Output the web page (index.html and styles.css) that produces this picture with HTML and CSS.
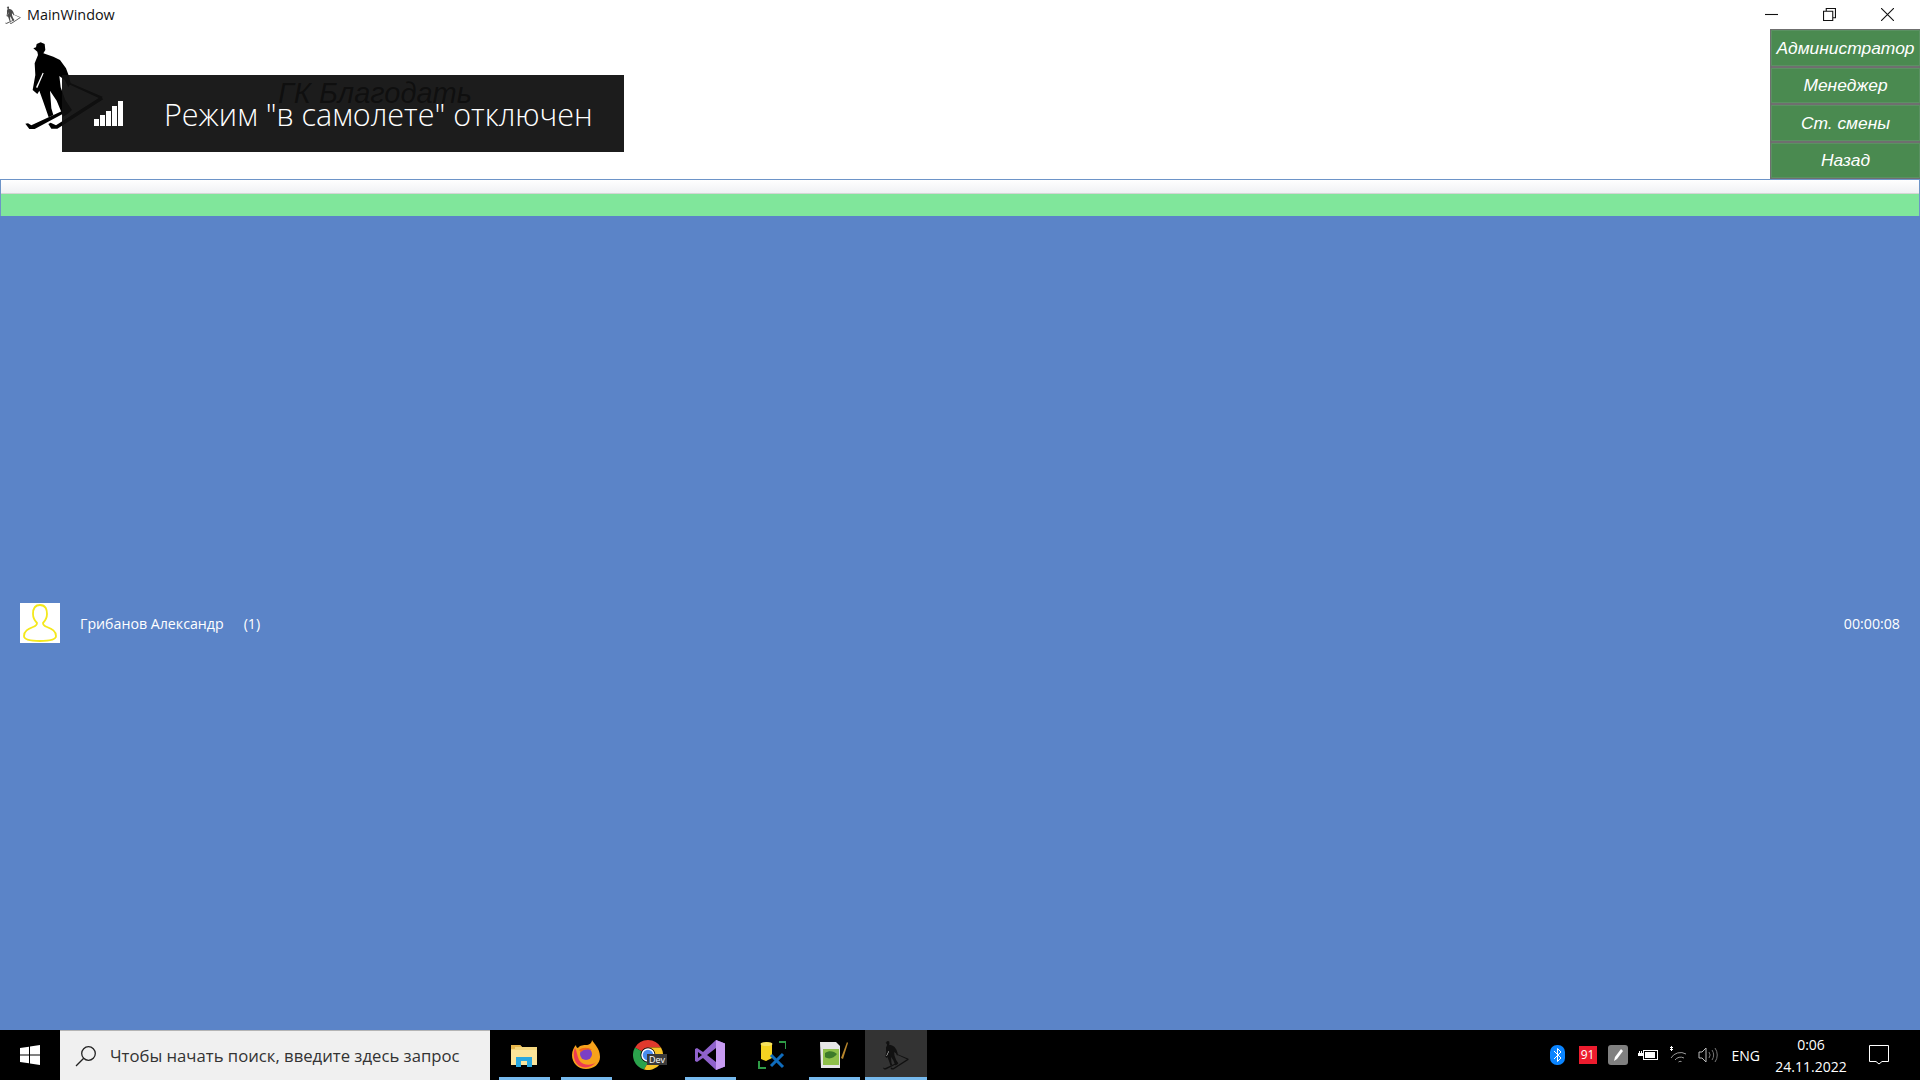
FILE: index.html
```html
<!DOCTYPE html>
<html>
<head>
    <meta charset="utf-8">
    <title>MainWindow</title>
    <link rel="stylesheet" href="styles.css">
</head>
<body>
    <svg width="0" height="0" class="defs">
        <defs>
            <g id="skier">
                <path d="M100 145 L108 142 L110 132 L122 127 L134 132 L136 150 L130 160 L160 170 L180 180 L198 205 L208 232 L212 250 L205 262 L194 240 L178 228 L182 262 L196 300 L216 330 L206 340 L190 350 L170 302 L150 272 L154 325 L160 345 L146 352 L128 300 L118 272 L112 282 L98 270 L106 225 L104 190 L114 165 L112 155 Z"/>
                <path d="M76 371 L84 370 L94 376 L188 332 L192 340 L104 387 L88 387 Z"/>
                <path d="M145 372 L152 368 L168 376 L302 290 L310 298 L172 386 L154 386 Z"/>
                <path d="M205 252 L210 248 L308 290 L304 298 Z"/>
                <path d="M128 218 L131 220 L112 264 L108 262 Z" fill="#fff"/>
            </g>
        </defs>
    </svg>

    <div class="window">
        <div class="titlebar">
            <svg class="title-icon" viewBox="60 110 270 290"><use href="#skier"/></svg>
            <span class="title-text">MainWindow</span>
            <div class="win-controls">
                <svg class="win-btn" viewBox="0 0 12 12"><path d="M0 6H12" stroke="#111" fill="none"/></svg>
                <svg class="win-btn" viewBox="0 0 12 12"><path d="M.5 3H9V11.5H.5Z M3 3V.5H11.5V9H9" stroke="#111" fill="none"/></svg>
                <svg class="win-btn" viewBox="0 0 12 12"><path d="M0 0L12 12M12 0L0 12" stroke="#111" fill="none"/></svg>
            </div>
        </div>

        <div class="header">
            <svg class="logo" viewBox="0 87 390 333"><use href="#skier"/></svg>
            <span class="company">ГК Благодать</span>
            <div class="side-menu">
                <div class="side-btn">Администратор</div>
                <div class="side-btn">Менеджер</div>
                <div class="side-btn">Ст. смены</div>
                <div class="side-btn">Назад</div>
            </div>
            <div class="toast">
                <svg class="toast-bars" width="29" height="25" viewBox="0 0 29 25" fill="#fff">
                    <rect x="0" y="18" width="5" height="7"/>
                    <rect x="6" y="14" width="5" height="11"/>
                    <rect x="12" y="10" width="5" height="15"/>
                    <rect x="18" y="5" width="5" height="20"/>
                    <rect x="24" y="0" width="5" height="25"/>
                </svg>
                <span class="toast-text">Режим "в самолете" отключен</span>
            </div>
        </div>

        <div class="progress">
            <div class="progress-top"></div>
            <div class="progress-fill"></div>
        </div>

        <div class="content">
            <div class="user-row">
                <svg class="avatar" viewBox="0 0 40 40">
                    <rect width="40" height="40" fill="#fff"/>
                    <path d="M20 2C14 2 13 7 13 11C13 15 15 18 17 20C17 22 16 23 13 24C8 26 4 28 4 33C4 37 10 38 20 38C30 38 36 37 36 33C36 28 32 26 27 24C24 23 23 22 23 20C25 18 27 15 27 11C27 7 26 2 20 2Z" fill="none" stroke="#f4e81c" stroke-width="1.8"/>
                </svg>
                <span class="user-name">Грибанов Александр</span>
                <span class="user-count">(1)</span>
                <span class="user-time">00:00:08</span>
            </div>
        </div>
    </div>

    <div class="taskbar">
        <div class="start">
            <svg width="20" height="20" viewBox="0 0 20 20" fill="#fff">
                <path d="M0 3L9 1.7V9.5H0Z M10 1.5L20 0V9.5H10Z M0 10.5H9V18.3L0 17Z M10 10.5H20V20L10 18.5Z"/>
            </svg>
        </div>
        <div class="search">
            <svg width="22" height="22" viewBox="0 0 22 22" fill="none" stroke="#222" stroke-width="1.3">
                <circle cx="13.5" cy="8.5" r="6.8"/>
                <path d="M8.7 13.3L1 21"/>
            </svg>
            <span class="search-text">Чтобы начать поиск, введите здесь запрос</span>
        </div>
        <div class="apps">
            <div class="app app-open">
                <svg width="28" height="26" viewBox="0 0 28 26">
                    <path d="M1 3H10L12 5H27V23H1Z" fill="#f5d77f"/>
                    <path d="M1 3H10L12 5H5V7H1Z" fill="#e8b64a"/>
                    <path d="M1 8H27V23H1Z" fill="#fbe49a"/>
                    <path d="M6 25V15H22V25H17V19H11V25Z" fill="#29a8e0"/>
                </svg>
            </div>
            <div class="app app-open">
                <svg width="28" height="30" viewBox="0 0 28 30">
                    <path d="M20 0C22 4 28 8 28 17C28 24 22 29 14 29C6 29 0 23 0 15C0 11 2 7 4 5C4 7 5 8 6 8C8 5 12 5 14 5C17 5 20 3 20 0Z" fill="#f7a21b"/>
                    <path d="M3 8C1 12 1 20 6 25C11 29 20 28 24 22C20 26 11 26 7 20C5 16 5 11 3 8Z" fill="#ee3b52"/>
                    <circle cx="14" cy="14" r="6" fill="#7b3fc4"/>
                    <path d="M7 10C10 7 17 7 20 10C17 9 11 9 9 12Z" fill="#f2641e"/>
                </svg>
            </div>
            <div class="app">
                <svg width="30" height="30" viewBox="0 0 30 30">
                    <path d="M15 0A15 15 0 0 1 28 7.5H15A7.5 7.5 0 0 0 8.500 11.300L2 7.500A15 15 0 0 1 15 0Z" fill="#e0392d"/>
                    <path d="M2 7.500L8.500 11.300A7.500 7.500 0 0 0 15 22.500L11 29.500A15 15 0 0 1 2 7.500Z" fill="#2ba24c"/>
                    <path d="M28 7.500A15 15 0 0 1 11 29.500L15 22.500A7.500 7.500 0 0 0 15 7.500Z" fill="#f7c325"/>
                    <circle cx="15" cy="15" r="6" fill="#4a8df0" stroke="#fff" stroke-width="1.500"/>
                </svg>
                <span class="dev-badge">Dev</span>
            </div>
            <div class="app app-open">
                <svg width="30" height="30" viewBox="0 0 30 30">
                    <path d="M21 0L30 3.500V26.500L21 30L8 18L2 22L0 21V9L2 8L8 12Z" fill="#8f62cc"/>
                    <path d="M21 0L30 3.500V26.500L21 30Z" fill="#c79bf2"/>
                    <path d="M21 8V22L12 15Z M3 12L7 15L3 18Z" fill="#000"/>
                </svg>
            </div>
            <div class="app">
                <svg width="28" height="28" viewBox="0 0 28 28">
                    <path d="M3 3C3 1 14 1 14 3V17L8 20L3 18Z" fill="#f5d321"/>
                    <ellipse cx="8.500" cy="3" rx="6" ry="2" fill="#f7e25e"/>
                    <path d="M21 1H28V8" fill="none" stroke="#2e9b46" stroke-width="2"/>
                    <path d="M1 20V27H8" fill="none" stroke="#2e9b46" stroke-width="2"/>
                    <path d="M13 14L25 26M25 13L13 25" stroke="#0f6cbd" stroke-width="3"/>
                </svg>
            </div>
            <div class="app app-open">
                <svg width="30" height="28" viewBox="0 0 30 28">
                    <path d="M1 1H17L21 5V27H2Z" fill="#e6e6e6"/>
                    <path d="M4 8H20V24H4Z" fill="#8fc04a"/>
                    <path d="M6 12C10 9 15 10 18 13C15 17 10 19 6 16Z" fill="#3d7a2a"/>
                    <path d="M22 17L28 1L29 2L24 18Z" fill="#b8862c"/>
                </svg>
            </div>
            <div class="app app-open app-active">
                <svg width="30" height="32" viewBox="60 110 270 290"><use href="#skier" fill="#111"/></svg>
            </div>
        </div>
        <div class="tray">
            <svg class="tray-item" width="15" height="20" viewBox="0 0 15 20">
                <rect width="15" height="20" rx="7" fill="#0a84ff"/>
                <path d="M4 6L11 13L7.500 16.500V3.500L11 7L4 14" fill="none" stroke="#fff" stroke-width="1"/>
            </svg>
            <span class="tray-red">91</span>
            <svg class="tray-item" width="20" height="20" viewBox="0 0 20 20">
                <rect width="20" height="20" rx="3" fill="#808080"/>
                <path d="M6 16L7 12L13 4L15 6L9 14Z" fill="#fff"/>
            </svg>
            <svg class="tray-item" width="20" height="12" viewBox="0 0 20 12" fill="#fff">
                <path d="M5 1H20V11H5Z M6 2V10H19V2Z" fill-rule="evenodd"/>
                <rect x="7" y="3" width="10" height="6"/>
                <path d="M0 4H5V7H0Z M1 2H2V4H1Z M3 2H4V4H3Z"/>
            </svg>
            <svg class="tray-item" width="18" height="18" viewBox="0 0 18 18" fill="none" stroke="#999">
                <path d="M2 12A11 11 0 0 1 17 8M6 14A7 7 0 0 1 15 12M9.500 16A3 3 0 0 1 12.500 15.500"/>
                <path d="M1 1L4 4M4 1L1 4M2.500 0V5" stroke="#fff"/>
            </svg>
            <svg class="tray-item" width="20" height="16" viewBox="0 0 20 16" fill="none" stroke="#bbb">
                <path d="M1 5H4L8 1V15L4 11H1Z"/>
                <path d="M11 5A5 5 0 0 1 11 11M14 3A9 9 0 0 1 14 13M17 1A12 12 0 0 1 17 15" stroke="#777"/>
            </svg>
            <span class="tray-lang">ENG</span>
            <div class="clock">
                <span>0:06</span>
                <span>24.11.2022</span>
            </div>
            <svg class="notify" width="20" height="20" viewBox="0 0 20 20" fill="none" stroke="#fff">
                <path d="M.5 .5H19.500V16.500H13L10 19L7 16.500H.5Z"/>
            </svg>
        </div>
    </div>
</body>
</html>
```

FILE: styles.css
```css
* {
    box-sizing: border-box;
}
html, body {
    height: 100%;
}
body {
    margin: 0;
    padding: 0;
    display: flex;
    flex-direction: column;
    overflow: hidden;
    background: #fff;
    font-family: "Open Sans", "Noto Sans", sans-serif;
}
.defs {
    position: absolute;
}
.window {
    flex: 1;
    display: flex;
    flex-direction: column;
    min-height: 0;
}

/* title bar */
.titlebar {
    height: 29px;
    display: flex;
    align-items: center;
    padding-left: 4px;
    background: #fff;
}
.title-icon {
    width: 18px;
    height: 20px;
    opacity: 0.7;
}
.title-text {
    margin-left: 5px;
    font-size: 14.400px;
    color: #111;
}
.win-controls {
    margin-left: auto;
    display: flex;
    padding-right: 26px;
}
.win-btn {
    width: 13px;
    height: 13px;
    margin-left: 45px;
}

/* header */
.header {
    position: relative;
    height: 150px;
    display: flex;
    background: #fff;
}
.logo {
    width: 130px;
    height: 111px;
}
.company {
    margin: 46px 0 0 148px;
    font-size: 29px;
    font-style: italic;
    color: #000;
    font-family: "Liberation Sans", sans-serif;
    line-height: 36px;
    height: 36px;
}
.side-menu {
    margin-left: auto;
    width: 150px;
    height: 150px;
    display: flex;
    flex-direction: column;
    gap: 2px;
    padding: 1px 0 1px 1px;
    background: #6f6f6f;
}
.side-btn {
    flex: 1;
    display: flex;
    align-items: center;
    justify-content: center;
    padding-top: 1px;
    background: #4a8a50;
    border: 1px solid #5b9163;
    color: #fff;
    font-family: "Liberation Sans", sans-serif;
    font-size: 17.400px;
    font-style: italic;
}
.toast {
    position: absolute;
    left: 62px;
    top: 46px;
    width: 562px;
    height: 77px;
    display: flex;
    align-items: center;
    background: rgba(16, 16, 16, 0.95);
    color: #fff;
}
.toast-bars {
    margin-left: 32px;
}
.toast-text {
    margin-left: 41px;
    font-size: 30.500px;
    font-weight: 300;
}

/* progress */
.progress {
    height: 37px;
    display: flex;
    flex-direction: column;
    border: 1px solid #6d94c8;
    border-bottom: 0;
    background: #fff;
}
.progress-top {
    height: 14px;
    background: linear-gradient(#fff, #f0f1f4);
    border-bottom: 1px solid #d5d5d5;
}
.progress-fill {
    flex: 1;
    background: #80e69b;
}

/* main list */
.content {
    flex: 1;
    display: flex;
    align-items: center;
    padding: 0 20px;
    background: #5b84c8;
    color: #fff;
}
.user-row {
    flex: 1;
    display: flex;
    align-items: center;
    font-size: 14.200px;
}
.avatar {
    width: 40px;
    height: 40px;
}
.user-name {
    margin-left: 20px;
}
.user-count {
    margin-left: 20px;
}
.user-time {
    margin-left: auto;
}

/* taskbar */
.taskbar {
    height: 50px;
    display: flex;
    align-items: stretch;
    background: #000;
    color: #fff;
}
.start {
    width: 60px;
    display: flex;
    align-items: center;
    justify-content: center;
}
.search {
    width: 430px;
    display: flex;
    align-items: center;
    padding-left: 15px;
    background: #f0f0f0;
    border-top: 1px solid #b4b4b4;
}
.search-text {
    margin-left: 13px;
    font-size: 16.700px;
    color: #333;
}
.apps {
    display: flex;
    margin-left: 3px;
}
.app {
    position: relative;
    width: 62px;
    display: flex;
    align-items: center;
    justify-content: center;
}
.app-open::after {
    content: "";
    position: absolute;
    left: 6px;
    right: 5px;
    bottom: 0;
    height: 3px;
    background: #76b9ed;
}
.app-active {
    background: #333;
}
.app-active::after {
    left: 0;
    right: 0;
}
.dev-badge {
    position: absolute;
    left: 30px;
    top: 24px;
    padding: 0 2px;
    background: #3a3a3a;
    font-size: 9px;
    line-height: 11px;
}
.tray {
    margin-left: auto;
    display: flex;
    align-items: center;
    padding-right: 31px;
}
.tray-item {
    flex: none;
}
.tray-red {
    width: 18px;
    height: 18px;
    margin: 0 11px 0 14px;
    background: #ed1c2e;
    font-size: 12px;
    line-height: 18px;
    text-align: center;
}
.tray > svg:nth-child(3) {
    margin-right: 10px;
}
.tray > svg:nth-child(4) {
    margin-right: 11px;
}
.tray > svg:nth-child(5) {
    margin-right: 11px;
}
.tray-lang {
    margin-left: 14px;
    font-size: 14px;
}
.clock {
    margin-left: 16px;
    width: 70px;
    display: flex;
    flex-direction: column;
    align-items: center;
    gap: 3px;
    font-size: 14px;
    line-height: 19px;
}
.notify {
    margin-left: 23px;
}
```
